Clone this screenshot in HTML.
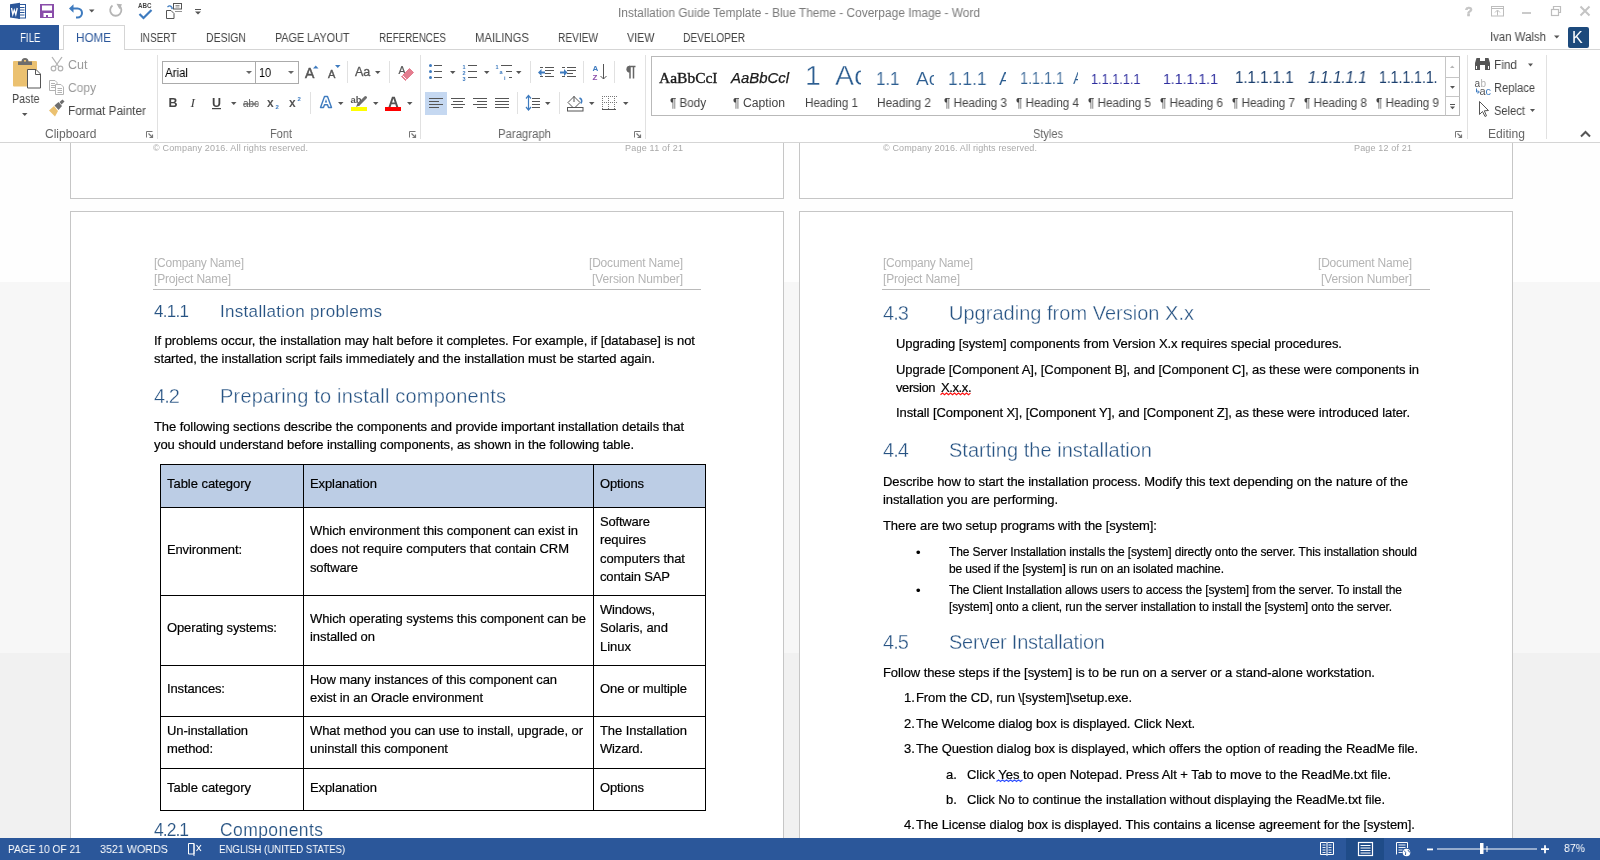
<!DOCTYPE html>
<html><head><meta charset="utf-8">
<style>
*{box-sizing:border-box;margin:0;padding:0}
html,body{width:1600px;height:860px;overflow:hidden;background:#fff;font-family:"Liberation Sans",sans-serif}
.a{position:absolute}
.t{position:absolute;white-space:pre;line-height:1;font-family:"Liberation Sans",sans-serif;will-change:transform}
svg{position:absolute;overflow:visible}
.page{position:absolute;background:#fff;border:1px solid #c6c6c6}
</style></head><body>
<!-- doc background bands -->
<div class="a" style="left:0;top:143px;width:1600px;height:139px;background:#fefefe"></div>
<div class="a" style="left:0;top:282px;width:1600px;height:371px;background:#f7f7f7"></div>
<div class="a" style="left:0;top:653px;width:1600px;height:185px;background:#f1f1f1"></div>

<!-- pages -->
<div class="page" style="left:70px;top:130px;width:714px;height:69px"></div>
<div class="page" style="left:799px;top:130px;width:714px;height:69px"></div>
<div class="page" style="left:70px;top:211px;width:714px;height:700px"></div>
<div class="page" style="left:799px;top:211px;width:714px;height:700px"></div>

<!-- header underline -->
<div class="a" style="left:153px;top:289px;width:548px;height:1px;background:#bababa"></div>
<div class="a" style="left:882px;top:289px;width:548px;height:1px;background:#bababa"></div>

<!-- table -->
<div class="a" style="left:160px;top:464px;width:546px;height:347px;border:1px solid #000"></div>
<div class="a" style="left:161px;top:465px;width:544px;height:42px;background:#bccde5"></div>
<div class="a" style="left:303px;top:464px;width:1px;height:347px;background:#000"></div>
<div class="a" style="left:593px;top:464px;width:1px;height:347px;background:#000"></div>
<div class="a" style="left:160px;top:507px;width:546px;height:1px;background:#000"></div>
<div class="a" style="left:160px;top:595px;width:546px;height:1px;background:#000"></div>
<div class="a" style="left:160px;top:665px;width:546px;height:1px;background:#000"></div>
<div class="a" style="left:160px;top:716px;width:546px;height:1px;background:#000"></div>
<div class="a" style="left:160px;top:768px;width:546px;height:1px;background:#000"></div>

<!-- spelling squiggles -->
<svg class="a" style="left:0;top:0" width="1600" height="860">
<path d="M940.5 394.7 L942.5 393.1 L944.5 394.7 L946.5 393.1 L948.5 394.7 L950.5 393.1 L952.5 394.7 L954.5 393.1 L956.5 394.7 L958.5 393.1 L960.5 394.7 L962.5 393.1 L964.5 394.7 L966.5 393.1 L968.5 394.7 L970.5 393.1" fill="none" stroke="#ff1010" stroke-width="1.2"/>
<path d="M996.5 781.5 L998.5 779.9 L1000.5 781.5 L1002.5 779.9 L1004.5 781.5 L1006.5 779.9 L1008.5 781.5 L1010.5 779.9 L1012.5 781.5 L1014.5 779.9 L1016.5 781.5 L1018.5 779.9 L1020.5 781.5 L1022.5 779.9" fill="none" stroke="#2f4fff" stroke-width="1.2"/>
</svg>

<div class=t style='left:153px;top:143.88px;font-size:9px;color:#a9a9a9;letter-spacing:0.166px;'>© Company 2016. All rights reserved.</div>
<div class=t style='left:625px;top:143.88px;font-size:9px;color:#a9a9a9;letter-spacing:0.217px;'>Page 11 of 21</div>
<div class=t style='left:154px;top:256.84px;font-size:12px;color:#b4b4b4;letter-spacing:-0.260px;'>[Company Name]</div>
<div class=t style='left:154px;top:272.84px;font-size:12px;color:#b4b4b4;letter-spacing:-0.181px;'>[Project Name]</div>
<div class=t style='left:589px;top:256.84px;font-size:12px;color:#b4b4b4;letter-spacing:-0.193px;'>[Document Name]</div>
<div class=t style='left:592px;top:272.84px;font-size:12px;color:#b4b4b4;letter-spacing:-0.115px;'>[Version Number]</div>
<div class=t style='left:154px;top:302.61px;font-size:17px;color:#275383;letter-spacing:-0.703px;-webkit-text-stroke:0.15px #fff;'>4.1.1</div>
<div class=t style='left:220px;top:302.61px;font-size:17px;color:#275383;letter-spacing:0.304px;-webkit-text-stroke:0.15px #fff;'>Installation problems</div>
<div class=t style='left:154px;top:334.00px;font-size:13px;color:#000;letter-spacing:-0.069px;-webkit-text-stroke:0.2px #000;'>If problems occur, the installation may halt before it completes. For example, if [database] is not</div>
<div class=t style='left:154px;top:352.00px;font-size:13px;color:#000;letter-spacing:-0.083px;-webkit-text-stroke:0.2px #000;'>started, the installation script fails immediately and the installation must be started again.</div>
<div class=t style='left:154px;top:386.07px;font-size:20px;color:#275383;letter-spacing:-0.906px;-webkit-text-stroke:0.35px #fff;'>4.2</div>
<div class=t style='left:220px;top:386.07px;font-size:20px;color:#275383;letter-spacing:0.195px;-webkit-text-stroke:0.35px #fff;'>Preparing to install components</div>
<div class=t style='left:154px;top:420.00px;font-size:13px;color:#000;letter-spacing:-0.082px;-webkit-text-stroke:0.2px #000;'>The following sections describe the components and provide important installation details that</div>
<div class=t style='left:154px;top:438.00px;font-size:13px;color:#000;letter-spacing:-0.094px;-webkit-text-stroke:0.2px #000;'>you should understand before installing components, as shown in the following table.</div>
<div class=t style='left:167px;top:477.00px;font-size:13px;color:#000;letter-spacing:-0.043px;-webkit-text-stroke:0.2px #000;'>Table category</div>
<div class=t style='left:310px;top:477.00px;font-size:13px;color:#000;letter-spacing:-0.095px;-webkit-text-stroke:0.2px #000;'>Explanation</div>
<div class=t style='left:600px;top:477.00px;font-size:13px;color:#000;letter-spacing:-0.135px;-webkit-text-stroke:0.2px #000;'>Options</div>
<div class=t style='left:167px;top:542.50px;font-size:13px;color:#000;letter-spacing:-0.145px;-webkit-text-stroke:0.2px #000;'>Environment:</div>
<div class=t style='left:310px;top:524.00px;font-size:13px;color:#000;letter-spacing:-0.084px;-webkit-text-stroke:0.2px #000;'>Which environment this component can exist in</div>
<div class=t style='left:310px;top:542.00px;font-size:13px;color:#000;letter-spacing:-0.079px;-webkit-text-stroke:0.2px #000;'>does not require computers that contain CRM</div>
<div class=t style='left:310px;top:560.50px;font-size:13px;color:#000;letter-spacing:-0.163px;-webkit-text-stroke:0.2px #000;'>software</div>
<div class=t style='left:600px;top:514.50px;font-size:13px;color:#000;letter-spacing:-0.188px;-webkit-text-stroke:0.2px #000;'>Software</div>
<div class=t style='left:600px;top:533.00px;font-size:13px;color:#000;letter-spacing:-0.138px;-webkit-text-stroke:0.2px #000;'>requires</div>
<div class=t style='left:600px;top:551.50px;font-size:13px;color:#000;letter-spacing:-0.077px;-webkit-text-stroke:0.2px #000;'>computers that</div>
<div class=t style='left:600px;top:570.00px;font-size:13px;color:#000;letter-spacing:-0.155px;-webkit-text-stroke:0.2px #000;'>contain SAP</div>
<div class=t style='left:167px;top:621.00px;font-size:13px;color:#000;letter-spacing:-0.118px;-webkit-text-stroke:0.2px #000;'>Operating systems:</div>
<div class=t style='left:310px;top:612.00px;font-size:13px;color:#000;letter-spacing:-0.083px;-webkit-text-stroke:0.2px #000;'>Which operating systems this component can be</div>
<div class=t style='left:310px;top:630.00px;font-size:13px;color:#000;letter-spacing:-0.071px;-webkit-text-stroke:0.2px #000;'>installed on</div>
<div class=t style='left:600px;top:603.00px;font-size:13px;color:#000;letter-spacing:-0.194px;-webkit-text-stroke:0.2px #000;'>Windows,</div>
<div class=t style='left:600px;top:621.00px;font-size:13px;color:#000;letter-spacing:-0.060px;-webkit-text-stroke:0.2px #000;'>Solaris, and</div>
<div class=t style='left:600px;top:639.50px;font-size:13px;color:#000;letter-spacing:-0.020px;-webkit-text-stroke:0.2px #000;'>Linux</div>
<div class=t style='left:167px;top:682.00px;font-size:13px;color:#000;letter-spacing:-0.141px;-webkit-text-stroke:0.2px #000;'>Instances:</div>
<div class=t style='left:310px;top:673.00px;font-size:13px;color:#000;letter-spacing:-0.096px;-webkit-text-stroke:0.2px #000;'>How many instances of this component can</div>
<div class=t style='left:310px;top:691.00px;font-size:13px;color:#000;letter-spacing:-0.089px;-webkit-text-stroke:0.2px #000;'>exist in an Oracle environment</div>
<div class=t style='left:600px;top:682.00px;font-size:13px;color:#000;letter-spacing:-0.083px;-webkit-text-stroke:0.2px #000;'>One or multiple</div>
<div class=t style='left:167px;top:724.00px;font-size:13px;color:#000;letter-spacing:-0.098px;-webkit-text-stroke:0.2px #000;'>Un-installation</div>
<div class=t style='left:167px;top:742.00px;font-size:13px;color:#000;letter-spacing:-0.164px;-webkit-text-stroke:0.2px #000;'>method:</div>
<div class=t style='left:310px;top:724.00px;font-size:13px;color:#000;letter-spacing:-0.066px;-webkit-text-stroke:0.2px #000;'>What method you can use to install, upgrade, or</div>
<div class=t style='left:310px;top:742.00px;font-size:13px;color:#000;letter-spacing:-0.065px;-webkit-text-stroke:0.2px #000;'>uninstall this component</div>
<div class=t style='left:600px;top:724.00px;font-size:13px;color:#000;letter-spacing:-0.078px;-webkit-text-stroke:0.2px #000;'>The Installation</div>
<div class=t style='left:600px;top:742.00px;font-size:13px;color:#000;letter-spacing:-0.177px;-webkit-text-stroke:0.2px #000;'>Wizard.</div>
<div class=t style='left:167px;top:781.00px;font-size:13px;color:#000;letter-spacing:-0.043px;-webkit-text-stroke:0.2px #000;'>Table category</div>
<div class=t style='left:310px;top:781.00px;font-size:13px;color:#000;letter-spacing:-0.095px;-webkit-text-stroke:0.2px #000;'>Explanation</div>
<div class=t style='left:600px;top:781.00px;font-size:13px;color:#000;letter-spacing:-0.135px;-webkit-text-stroke:0.2px #000;'>Options</div>
<div class=t style='left:154px;top:821.69px;font-size:17.5px;color:#275383;letter-spacing:-0.984px;-webkit-text-stroke:0.15px #fff;'>4.2.1</div>
<div class=t style='left:220px;top:821.69px;font-size:17.5px;color:#275383;letter-spacing:0.418px;-webkit-text-stroke:0.15px #fff;'>Components</div>
<div class=t style='left:883px;top:143.88px;font-size:9px;color:#a9a9a9;letter-spacing:0.137px;'>© Company 2016. All rights reserved.</div>
<div class=t style='left:1354px;top:143.88px;font-size:9px;color:#a9a9a9;letter-spacing:0.161px;'>Page 12 of 21</div>
<div class=t style='left:883px;top:256.84px;font-size:12px;color:#b4b4b4;letter-spacing:-0.260px;'>[Company Name]</div>
<div class=t style='left:883px;top:272.84px;font-size:12px;color:#b4b4b4;letter-spacing:-0.181px;'>[Project Name]</div>
<div class=t style='left:1318px;top:256.84px;font-size:12px;color:#b4b4b4;letter-spacing:-0.193px;'>[Document Name]</div>
<div class=t style='left:1321px;top:272.84px;font-size:12px;color:#b4b4b4;letter-spacing:-0.115px;'>[Version Number]</div>
<div class=t style='left:883px;top:302.57px;font-size:20px;color:#275383;letter-spacing:-0.906px;-webkit-text-stroke:0.35px #fff;'>4.3</div>
<div class=t style='left:949px;top:302.57px;font-size:20px;color:#275383;letter-spacing:0.018px;-webkit-text-stroke:0.35px #fff;'>Upgrading from Version X.x</div>
<div class=t style='left:896px;top:336.50px;font-size:13px;color:#000;letter-spacing:-0.086px;-webkit-text-stroke:0.2px #000;'>Upgrading [system] components from Version X.x requires special procedures.</div>
<div class=t style='left:896px;top:362.50px;font-size:13px;color:#000;letter-spacing:-0.081px;-webkit-text-stroke:0.2px #000;'>Upgrade [Component A], [Component B], and [Component C], as these were components in</div>
<div class=t style='left:896px;top:380.50px;font-size:13px;color:#000;letter-spacing:-0.404px;-webkit-text-stroke:0.2px #000;'>version</div>
<div class=t style='left:940.5px;top:380.50px;font-size:13px;color:#000;letter-spacing:-0.403px;-webkit-text-stroke:0.2px #000;'>X.x.x.</div>
<div class=t style='left:896px;top:406.00px;font-size:13px;color:#000;letter-spacing:-0.078px;-webkit-text-stroke:0.2px #000;'>Install [Component X], [Component Y], and [Component Z], as these were introduced later.</div>
<div class=t style='left:883px;top:439.57px;font-size:20px;color:#275383;letter-spacing:-0.906px;-webkit-text-stroke:0.35px #fff;'>4.4</div>
<div class=t style='left:949px;top:439.57px;font-size:20px;color:#275383;letter-spacing:0.027px;-webkit-text-stroke:0.35px #fff;'>Starting the installation</div>
<div class=t style='left:883px;top:474.50px;font-size:13px;color:#000;letter-spacing:-0.081px;-webkit-text-stroke:0.2px #000;'>Describe how to start the installation process. Modify this text depending on the nature of the</div>
<div class=t style='left:883px;top:492.50px;font-size:13px;color:#000;letter-spacing:-0.089px;-webkit-text-stroke:0.2px #000;'>installation you are performing.</div>
<div class=t style='left:883px;top:518.50px;font-size:13px;color:#000;letter-spacing:-0.091px;-webkit-text-stroke:0.2px #000;'>There are two setup programs with the [system]:</div>
<div class=t style='left:915.5px;top:545.50px;font-size:13px;color:#000;-webkit-text-stroke:0.2px #000;'>•</div>
<div class=t style='left:949px;top:545.84px;font-size:12px;color:#000;letter-spacing:-0.126px;-webkit-text-stroke:0.2px #000;'>The Server Installation installs the [system] directly onto the server. This installation should</div>
<div class=t style='left:949px;top:562.84px;font-size:12px;color:#000;letter-spacing:-0.148px;-webkit-text-stroke:0.2px #000;'>be used if the [system] is run on an isolated machine.</div>
<div class=t style='left:915.5px;top:583.50px;font-size:13px;color:#000;-webkit-text-stroke:0.2px #000;'>•</div>
<div class=t style='left:949px;top:583.84px;font-size:12px;color:#000;letter-spacing:-0.115px;-webkit-text-stroke:0.2px #000;'>The Client Installation allows users to access the [system] from the server. To install the</div>
<div class=t style='left:949px;top:600.84px;font-size:12px;color:#000;letter-spacing:-0.131px;-webkit-text-stroke:0.2px #000;'>[system] onto a client, run the server installation to install the [system] onto the server.</div>
<div class=t style='left:883px;top:631.57px;font-size:20px;color:#275383;letter-spacing:-0.906px;-webkit-text-stroke:0.35px #fff;'>4.5</div>
<div class=t style='left:949px;top:631.57px;font-size:20px;color:#275383;letter-spacing:-0.227px;-webkit-text-stroke:0.35px #fff;'>Server Installation</div>
<div class=t style='left:883px;top:665.50px;font-size:13px;color:#000;letter-spacing:-0.075px;-webkit-text-stroke:0.2px #000;'>Follow these steps if the [system] is to be run on a server or a stand-alone workstation.</div>
<div class=t style='left:904px;top:690.50px;font-size:13px;color:#000;-webkit-text-stroke:0.2px #000;'>1.</div>
<div class=t style='left:916px;top:690.50px;font-size:13px;color:#000;letter-spacing:-0.101px;-webkit-text-stroke:0.2px #000;'>From the CD, run \[system]\setup.exe.</div>
<div class=t style='left:904px;top:716.70px;font-size:13px;color:#000;-webkit-text-stroke:0.2px #000;'>2.</div>
<div class=t style='left:916px;top:716.70px;font-size:13px;color:#000;letter-spacing:-0.100px;-webkit-text-stroke:0.2px #000;'>The Welcome dialog box is displayed. Click Next.</div>
<div class=t style='left:904px;top:741.50px;font-size:13px;color:#000;-webkit-text-stroke:0.2px #000;'>3.</div>
<div class=t style='left:916px;top:741.50px;font-size:13px;color:#000;letter-spacing:-0.082px;-webkit-text-stroke:0.2px #000;'>The Question dialog box is displayed, which offers the option of reading the ReadMe file.</div>
<div class=t style='left:946px;top:768.00px;font-size:13px;color:#000;-webkit-text-stroke:0.2px #000;'>a.</div>
<div class=t style='left:967px;top:768.00px;font-size:13px;color:#000;letter-spacing:-0.034px;-webkit-text-stroke:0.2px #000;'>Click Yes to open Notepad. Press Alt + Tab to move to the ReadMe.txt file.</div>
<div class=t style='left:946px;top:793.00px;font-size:13px;color:#000;-webkit-text-stroke:0.2px #000;'>b.</div>
<div class=t style='left:967px;top:793.00px;font-size:13px;color:#000;letter-spacing:-0.081px;-webkit-text-stroke:0.2px #000;'>Click No to continue the installation without displaying the ReadMe.txt file.</div>
<div class=t style='left:904px;top:817.50px;font-size:13px;color:#000;-webkit-text-stroke:0.2px #000;'>4.</div>
<div class=t style='left:916px;top:817.50px;font-size:13px;color:#000;letter-spacing:-0.076px;-webkit-text-stroke:0.2px #000;'>The License dialog box is displayed. This contains a license agreement for the [system].</div>

<!-- ============ CHROME BACKGROUNDS ============ -->
<div class="a" style="left:0;top:0;width:1600px;height:142px;background:#fff"></div>
<div class="a" style="left:0;top:142px;width:1600px;height:1px;background:#d5d5d5"></div>
<div class="a" style="left:0;top:49px;width:1600px;height:1px;background:#d5d5d5"></div>
<!-- FILE -->
<div class="a" style="left:0;top:25px;width:59px;height:25px;background:#2b579a"></div>
<!-- HOME tab -->
<div class="a" style="left:63px;top:25px;width:62px;height:25px;border:1px solid #d5d5d5;border-bottom:none;background:#fff"></div>
<!-- K avatar -->
<div class="a" style="left:1568px;top:27px;width:21px;height:21px;background:#1d4a7c;border-radius:2px"></div>
<!-- status bar -->
<div class="a" style="left:0;top:838px;width:1600px;height:22px;background:#2b579a"></div>
<div class="a" style="left:1346px;top:838px;width:38px;height:22px;background:#1f4c88"></div>

<svg class="a" style="left:0;top:0" width="1600" height="860" shape-rendering="geometricPrecision">
<!-- ===== Title bar ===== -->
<!-- Word icon -->
<rect x="18.5" y="4.5" width="7" height="13.5" fill="#fff" stroke="#2b579a" stroke-width="1"/>
<path d="M20 7.5h4.5M20 10h4.5M20 12.5h4.5M20 15h4.5" stroke="#2b579a" stroke-width="1"/>
<path d="M10 4.2 L20 2.8 L20 19 L10 17.6 Z" fill="#2b579a"/>
<path d="M11.5 8 L12.8 14.5 L14.3 10 L15.8 14.5 L17.2 8" fill="none" stroke="#fff" stroke-width="1.3"/>
<!-- Save -->
<path d="M40 4 H54 V18 H40 Z M42 5.5 V10.5 H52 V5.5 Z M43.5 13 V17 H46 V15 H48 V17 H52 V13 Z" fill="#8a4eaa" fill-rule="evenodd"/>
<!-- Undo -->
<path d="M71 8.5 H77.5 A4.5 4.5 0 0 1 77.5 17.5 H76" fill="none" stroke="#3e7bbf" stroke-width="2"/>
<path d="M69 8.5 L73.5 4.2 L73.5 12.8 Z" fill="#3e7bbf"/>
<path d="M89 9.5 h5.5 l-2.75 3 z" fill="#555"/>
<!-- Redo (disabled) -->
<path d="M119.3 5.8 A5.6 5.6 0 1 1 112.5 5.6" fill="none" stroke="#b5b5b5" stroke-width="1.8"/>
<path d="M116.5 3.8 L122 4.2 L119.5 9.2 Z" fill="#b5b5b5"/>
<!-- Spelling -->
<text x="138" y="7.8" font-family="Liberation Sans" font-weight="bold" font-size="6.3" fill="#444" textLength="13.5" lengthAdjust="spacingAndGlyphs">ABC</text>
<path d="M139.5 14 L143.5 18 L151.5 10" fill="none" stroke="#3e7bbf" stroke-width="2.2"/>
<!-- Draft / other icon -->
<path d="M166.5 10.5 H171 L174 13.5 V18.5 H166.5 Z" fill="#fff" stroke="#555" stroke-width="1"/>
<rect x="173.5" y="3.5" width="8" height="5.5" fill="#fff" stroke="#555" stroke-width="1"/>
<path d="M175.5 5.5h4M175.5 7h4M175 11.5h7" stroke="#777" stroke-width="0.8"/>
<path d="M167.5 7 Q170 4.5 172 7.5" fill="none" stroke="#3e7bbf" stroke-width="1.2"/>
<path d="M170.5 7.5 L173.5 7.5 L172 9.5 Z" fill="#3e7bbf"/>
<!-- customize -->
<path d="M195 9.5 h6" stroke="#555" stroke-width="1"/>
<path d="M195 11.5 h6 l-3 3 z" fill="#555"/>
<!-- right window controls -->
<text x="1465" y="16" font-family="Liberation Sans" font-weight="bold" font-size="12.5" fill="#c4c4c4" stroke="#c4c4c4" stroke-width="0.7">?</text>
<rect x="1491.5" y="6.5" width="12" height="9.5" fill="none" stroke="#bdbdbd" stroke-width="1"/>
<path d="M1491.5 8.5 h12" stroke="#bdbdbd" stroke-width="1"/>
<path d="M1497.5 15.5 V10.5 M1495 12.5 L1497.5 10 L1500 12.5" fill="none" stroke="#bdbdbd" stroke-width="1"/>
<path d="M1522 13 h9" stroke="#bdbdbd" stroke-width="1.6"/>
<rect x="1551.5" y="9.5" width="7" height="6" fill="none" stroke="#bdbdbd" stroke-width="1.2"/>
<path d="M1553.5 9.5 V6.5 H1560.5 V12.5 H1558.5" fill="none" stroke="#bdbdbd" stroke-width="1.2"/>
<path d="M1580.5 6.5 L1589.5 15.5 M1589.5 6.5 L1580.5 15.5" stroke="#c4c4c4" stroke-width="2"/>
<!-- user dropdown -->
<path d="M1554 35.5 h5.5 l-2.75 3 z" fill="#555"/>

<!-- ===== Clipboard ===== -->
<rect x="13" y="61" width="24" height="25.5" rx="1" fill="#ebc170"/>
<path d="M18 65 V61.5 H21.5 Q21.5 58 25 58 Q28.5 58 28.5 61.5 H32 V65 Z" fill="#6d6d6d"/>
<rect x="24" y="60" width="2" height="1.6" fill="#ebc170"/>
<path d="M27.5 69.5 H36 L40.5 74 V88 H27.5 Z" fill="#fff" stroke="#555" stroke-width="1"/>
<path d="M35.5 69.5 V74.5 H40.5" fill="none" stroke="#555" stroke-width="1"/>
<path d="M22 113 h5.5 l-2.75 3 z" fill="#555"/>
<!-- cut -->
<path d="M52 57 L59 67 M62 57 L55 67" stroke="#b3b3b3" stroke-width="1.3"/>
<circle cx="53.5" cy="68.5" r="2.3" fill="none" stroke="#b3b3b3" stroke-width="1.2"/>
<circle cx="60.5" cy="68.5" r="2.3" fill="none" stroke="#b3b3b3" stroke-width="1.2"/>
<!-- copy -->
<path d="M49.5 80.5 H55 L57 82.5 V90.5 H49.5 Z" fill="#fff" stroke="#b3b3b3" stroke-width="1"/>
<path d="M55.5 84.5 H61 L63.5 87 V94.5 H55.5 Z" fill="#fff" stroke="#b3b3b3" stroke-width="1"/>
<path d="M51 83.5h4M51 85.5h4M51 87.5h4M57.5 88.5h4.5M57.5 90.5h4.5M57.5 92.5h4.5" stroke="#b3b3b3" stroke-width="1"/>
<!-- format painter -->
<path d="M49 110.5 L54 106 L58 111 L55 116.5 Z" fill="#ebc170"/>
<path d="M54.5 105.5 L58.5 102 L62 106 L58.5 110 Z" fill="#6d6d6d"/>
<path d="M59.5 102 L62.5 99.5 L64.5 101.5 L61.5 104.5 Z" fill="#6d6d6d"/>
<!-- launcher -->
<path d="M146.5 137.5 V131.5 H152.5" fill="none" stroke="#777" stroke-width="1"/>
<path d="M148.5 133.5 L152.5 137.5 M152.5 134.5 V137.5 H149.5" fill="none" stroke="#777" stroke-width="1.2"/>
<rect x="157" y="55" width="1" height="84" fill="#e1e1e1"/>

<!-- ===== Font ===== -->
<rect x="162.5" y="61.5" width="136" height="22" fill="#fff" stroke="#ababab" stroke-width="1"/>
<path d="M255.5 61.5 V83.5" stroke="#ababab" stroke-width="1"/>
<path d="M246 71 h6 l-3 3 z" fill="#666"/>
<path d="M288 71 h6 l-3 3 z" fill="#666"/>
<text x="305" y="78" font-family="Liberation Sans" font-size="14" fill="#555" stroke="#555" stroke-width="0.5">A</text>
<path d="M313 68.5 h5.5 l-2.75 -3 z" fill="#3e7bbf"/>
<text x="328" y="78" font-family="Liberation Sans" font-size="11" fill="#555" stroke="#555" stroke-width="0.4">A</text>
<path d="M335 65 h5.5 l-2.75 3 z" fill="#3e7bbf"/>
<rect x="347" y="61" width="1" height="22" fill="#e1e1e1"/>
<text x="355" y="76" font-family="Liberation Sans" font-size="12.5" fill="#555" stroke="#555" stroke-width="0.3">Aa</text>
<path d="M375 71 h5.5 l-2.75 3 z" fill="#555"/>
<rect x="389" y="61" width="1" height="22" fill="#e1e1e1"/>
<text x="398.5" y="73.5" font-family="Liberation Sans" font-size="10.5" fill="#555" stroke="#555" stroke-width="0.2">A</text>
<path d="M401.5 76.5 L409.5 68.5 L413.5 72.5 L405.5 80.5 Z" fill="#e47d8f" stroke="#e47d8f" stroke-width="1" stroke-linejoin="round"/>
<path d="M402.5 75.5 L406.5 79.5" stroke="#fff" stroke-width="1"/>
<!-- row 2 -->
<text x="168.5" y="107.2" font-family="Liberation Sans" font-weight="bold" font-size="12.5" fill="#444">B</text>
<text x="190.5" y="107.2" font-family="Liberation Serif" font-style="italic" font-size="13.5" fill="#444">I</text>
<text x="212" y="107" font-family="Liberation Sans" font-weight="bold" font-size="12.5" fill="#444">U</text>
<rect x="212" y="108" width="9" height="1.2" fill="#444"/>
<path d="M231 102 h5.5 l-2.75 3 z" fill="#555"/>
<text x="243" y="107" font-family="Liberation Sans" font-size="11" fill="#555" textLength="16" lengthAdjust="spacingAndGlyphs">abc</text>
<rect x="243" y="103.5" width="16" height="1" fill="#555"/>
<text x="267" y="107.2" font-family="Liberation Sans" font-weight="bold" font-size="12" fill="#555">x</text>
<text x="275.5" y="108.5" font-family="Liberation Sans" font-weight="bold" font-size="6" fill="#3e7bbf">2</text>
<text x="289" y="107.2" font-family="Liberation Sans" font-weight="bold" font-size="12" fill="#555">x</text>
<text x="297.5" y="100.5" font-family="Liberation Sans" font-weight="bold" font-size="6" fill="#3e7bbf">2</text>
<rect x="310" y="92" width="1" height="22" fill="#e1e1e1"/>
<path d="M320.5 107.5 L324.5 96.5 H327.5 L331.5 107.5 H328.5 L327.5 104.7 H324.5 L323.5 107.5 Z" fill="#fff" stroke="#3e7bbf" stroke-width="1.4" stroke-linejoin="round"/>
<path d="M324.8 102.6 L326 99 L327.2 102.6 Z" fill="#3e7bbf"/>
<path d="M338 102 h5.5 l-2.75 3 z" fill="#555"/>
<text x="350.5" y="102.5" font-family="Liberation Sans" font-weight="bold" font-size="9.5" fill="#555">ab</text>
<path d="M358.5 104.5 L365.5 97.5" stroke="#6d6d6d" stroke-width="3" stroke-linecap="round"/>
<path d="M356 107 L357.5 103.5 L359.5 105.5 Z" fill="#6d6d6d"/>
<rect x="351" y="107" width="16" height="4" fill="#ffff00"/>
<path d="M373 102 h5.5 l-2.75 3 z" fill="#555"/>
<path d="M388.5 107 L392 96.8 H394.8 L398.3 107 H396.2 L395.3 104.2 H391.5 L390.6 107 Z M392.1 102.5 H394.7 L393.4 98.6 Z" fill="#555" fill-rule="evenodd"/>
<rect x="385" y="107" width="16" height="4" fill="#ff0000"/>
<path d="M407 102 h5.5 l-2.75 3 z" fill="#555"/>
<path d="M409.5 137.5 V131.5 H415.5" fill="none" stroke="#777" stroke-width="1"/>
<path d="M411.5 133.5 L415.5 137.5 M415.5 134.5 V137.5 H412.5" fill="none" stroke="#777" stroke-width="1.2"/>
<rect x="420" y="55" width="1" height="84" fill="#e1e1e1"/>

<!-- ===== Paragraph ===== -->
<g fill="#3e7bbf"><circle cx="430.5" cy="65.5" r="1.5"/><circle cx="430.5" cy="71.5" r="1.5"/><circle cx="430.5" cy="77.5" r="1.5"/></g>
<path d="M434 65.5h8M434 71.5h8M434 77.5h8" stroke="#555" stroke-width="1"/>
<path d="M450 71 h5.5 l-2.75 3 z" fill="#555"/>
<text x="462.5" y="68.5" font-family="Liberation Sans" font-weight="bold" font-size="5.5" fill="#3e7bbf">1</text>
<text x="462.5" y="74.5" font-family="Liberation Sans" font-weight="bold" font-size="5.5" fill="#3e7bbf">2</text>
<text x="462.5" y="80.5" font-family="Liberation Sans" font-weight="bold" font-size="5.5" fill="#3e7bbf">3</text>
<path d="M468 65.5h9M468 71.5h9M468 77.5h9" stroke="#555" stroke-width="1"/>
<path d="M484 71 h5.5 l-2.75 3 z" fill="#555"/>
<text x="495.5" y="68.5" font-family="Liberation Sans" font-weight="bold" font-size="5.5" fill="#3e7bbf">1</text>
<text x="499.5" y="74" font-family="Liberation Sans" font-weight="bold" font-size="5.5" fill="#3e7bbf">a</text>
<text x="504" y="79.5" font-family="Liberation Sans" font-weight="bold" font-size="5.5" fill="#3e7bbf">i</text>
<path d="M501 65.5h11M506 71.5h6M509 77.5h3" stroke="#555" stroke-width="1"/>
<path d="M516 71 h5.5 l-2.75 3 z" fill="#555"/>
<rect x="530" y="61" width="1" height="22" fill="#e1e1e1"/>
<path d="M540 67.5h3M545 67.5h9M545 70.5h9M545 73.5h6M540 76.5h3M545 76.5h9" stroke="#555" stroke-width="1"/>
<path d="M538 72.5 L541.5 69 V71.5 H545 V73.5 H541.5 V76 Z" fill="#3e7bbf"/>
<path d="M562 67.5h3M567 67.5h9M567 70.5h9M567 73.5h6M562 76.5h3M567 76.5h9" stroke="#555" stroke-width="1"/>
<path d="M567.5 72.5 L564 69 V71.5 H560 V73.5 H564 V76 Z" fill="#3e7bbf"/>
<rect x="583" y="61" width="1" height="22" fill="#e1e1e1"/>
<text x="592.5" y="70.5" font-family="Liberation Sans" font-weight="bold" font-size="8" fill="#3e7bbf">A</text>
<text x="592.5" y="79.5" font-family="Liberation Sans" font-weight="bold" font-size="8" fill="#8a4eaa">Z</text>
<path d="M603.5 64 V79" stroke="#555" stroke-width="1"/>
<path d="M600.5 76 L603.5 79 L606.5 76" fill="none" stroke="#555" stroke-width="1"/>
<rect x="614" y="61" width="1" height="22" fill="#e1e1e1"/>
<path d="M629 66.5 H635.5 M630 66.5 V78.5 M633.5 66.5 V78.5" stroke="#666" stroke-width="1.5"/>
<path d="M630 65.8 A3.6 3.4 0 0 0 630 72.6 Z" fill="#666"/>
<!-- row 2 -->
<rect x="425" y="92" width="22" height="23" fill="#c5d8f1"/>
<path d="M429 98.5h14M429 101.5h10M429 104.5h14M429 107.5h10" stroke="#555" stroke-width="1"/>
<path d="M451 98.5h14M453 101.5h10M451 104.5h14M453 107.5h10" stroke="#555" stroke-width="1"/>
<path d="M473 98.5h14M477 101.5h10M473 104.5h14M477 107.5h10" stroke="#555" stroke-width="1"/>
<path d="M495 98.5h14M495 101.5h14M495 104.5h14M495 107.5h14" stroke="#555" stroke-width="1"/>
<rect x="517" y="92" width="1" height="22" fill="#e1e1e1"/>
<path d="M528.5 96 V109.5" stroke="#3e7bbf" stroke-width="1.2"/>
<path d="M526 98.5 L528.5 95.5 L531 98.5 M526 107 L528.5 110 L531 107" fill="none" stroke="#3e7bbf" stroke-width="1.2"/>
<path d="M532 98.5h8M532 101.5h8M532 104.5h8M532 107.5h8" stroke="#555" stroke-width="1"/>
<path d="M545 102 h5.5 l-2.75 3 z" fill="#555"/>
<rect x="559" y="92" width="1" height="22" fill="#e1e1e1"/>
<path d="M568 102.5 L574 96.5 L580 102.5 L574 108.5 Z" fill="#fff" stroke="#555" stroke-width="1"/>
<path d="M574 96 V102" stroke="#555" stroke-width="1"/>
<path d="M579.5 98 Q583 99.5 581 103.5" fill="none" stroke="#3e7bbf" stroke-width="1.6"/>
<rect x="567.5" y="107.5" width="15.5" height="3.5" fill="#fff" stroke="#555" stroke-width="1"/>
<path d="M589 102 h5.5 l-2.75 3 z" fill="#555"/>
<g fill="#777"><rect x="602" y="96" width="1" height="1"/><rect x="602" y="102" width="1" height="1"/><rect x="604" y="96" width="1" height="1"/><rect x="604" y="102" width="1" height="1"/><rect x="606" y="96" width="1" height="1"/><rect x="606" y="102" width="1" height="1"/><rect x="608" y="96" width="1" height="1"/><rect x="608" y="102" width="1" height="1"/><rect x="610" y="96" width="1" height="1"/><rect x="610" y="102" width="1" height="1"/><rect x="612" y="96" width="1" height="1"/><rect x="612" y="102" width="1" height="1"/><rect x="614" y="96" width="1" height="1"/><rect x="614" y="102" width="1" height="1"/><rect x="616" y="96" width="1" height="1"/><rect x="616" y="102" width="1" height="1"/><rect x="602" y="98" width="1" height="1"/><rect x="608" y="98" width="1" height="1"/><rect x="614" y="98" width="1" height="1"/><rect x="602" y="100" width="1" height="1"/><rect x="608" y="100" width="1" height="1"/><rect x="614" y="100" width="1" height="1"/><rect x="602" y="102" width="1" height="1"/><rect x="608" y="102" width="1" height="1"/><rect x="614" y="102" width="1" height="1"/><rect x="602" y="104" width="1" height="1"/><rect x="608" y="104" width="1" height="1"/><rect x="614" y="104" width="1" height="1"/><rect x="602" y="106" width="1" height="1"/><rect x="608" y="106" width="1" height="1"/><rect x="614" y="106" width="1" height="1"/><rect x="602" y="108" width="1" height="1"/><rect x="608" y="108" width="1" height="1"/><rect x="614" y="108" width="1" height="1"/></g>
<path d="M602 109.5 H616" stroke="#555" stroke-width="1"/>
<path d="M623 102 h5.5 l-2.75 3 z" fill="#555"/>
<path d="M634.5 137.5 V131.5 H640.5" fill="none" stroke="#777" stroke-width="1"/>
<path d="M636.5 133.5 L640.5 137.5 M640.5 134.5 V137.5 H637.5" fill="none" stroke="#777" stroke-width="1.2"/>
<rect x="645" y="55" width="1" height="84" fill="#e1e1e1"/>

<!-- ===== Styles gallery ===== -->
<rect x="651.5" y="56.5" width="808" height="59" fill="none" stroke="#b9b9b9" stroke-width="1"/>
<path d="M1445.5 56.5 V115.5 M1445.5 77.5 H1459.5 M1445.5 96.5 H1459.5" stroke="#c6c6c6" stroke-width="1"/>
<path d="M1450 68 h4.5 l-2.25 -2.5 z" fill="#b5b5b5"/>
<path d="M1450 86 h5 l-2.5 2.8 z" fill="#555"/>
<path d="M1450 104.5 h5" stroke="#555" stroke-width="1"/>
<path d="M1450 106.5 h5 l-2.5 2.8 z" fill="#555"/>
<path d="M1455.5 137.5 V131.5 H1461.5" fill="none" stroke="#777" stroke-width="1"/>
<path d="M1457.5 133.5 L1461.5 137.5 M1461.5 134.5 V137.5 H1458.5" fill="none" stroke="#777" stroke-width="1.2"/>
<rect x="1467" y="55" width="1" height="84" fill="#e1e1e1"/>

<!-- ===== Editing ===== -->
<g fill="#555">
<path d="M1475 70 V63 L1476.5 58 H1480 V70 Z"/>
<path d="M1490 70 V63 L1488.5 58 H1485 V70 Z"/>
<rect x="1480" y="61" width="5" height="4"/>
</g>
<path d="M1476.5 66 V69 M1488.5 66 V69" stroke="#fff" stroke-width="1"/>
<path d="M1528 63.5 h5 l-2.5 3 z" fill="#555"/>
<text x="1474.5" y="87" font-family="Liberation Sans" font-size="10" fill="#555">a</text>
<text x="1480.5" y="87" font-family="Liberation Sans" font-size="10" fill="#b0b0b0">b</text>
<text x="1479.5" y="94.5" font-family="Liberation Sans" font-size="11" fill="#555">a</text>
<text x="1485.5" y="94.5" font-family="Liberation Sans" font-size="11" fill="#3e7bbf">c</text>
<path d="M1476.5 88.5 V92 H1479" fill="none" stroke="#3e7bbf" stroke-width="1"/>
<path d="M1477.5 90.5 L1479.5 92 L1477.5 93.5" fill="none" stroke="#3e7bbf" stroke-width="0.8"/>
<path d="M1479.5 101.5 V114.5 L1482.5 111.5 L1485 116.5 L1486.5 115.8 L1484.3 110.8 L1488.5 110.5 Z" fill="#fff" stroke="#555" stroke-width="1"/>
<path d="M1530 109 h5 l-2.5 3 z" fill="#555"/>
<rect x="1546" y="55" width="1" height="84" fill="#e1e1e1"/>
<path d="M1581 136.5 L1585.5 132 L1590 136.5" fill="none" stroke="#555" stroke-width="2"/>

<!-- ===== Status bar ===== -->
<!-- proofing icon -->
<path d="M188.5 843.5 H194 V854 H188.5 Z" fill="none" stroke="#fff" stroke-width="1"/>
<path d="M194 843.5 V856" stroke="#fff" stroke-width="1"/>
<path d="M196.5 845 L201 851 M201 845 L196.5 851" stroke="#fff" stroke-width="1.1"/>
<!-- read mode -->
<path d="M1320.5 842.5 H1326.5 L1327 843.5 L1327.5 842.5 H1333.5 V854.5 H1327.5 L1327 855.5 L1326.5 854.5 H1320.5 Z" fill="none" stroke="#fff" stroke-width="1"/>
<path d="M1322.5 845h3M1322.5 847.5h3M1322.5 850h3M1322.5 852.5h3M1328.5 845h3M1328.5 847.5h3M1328.5 850h3M1328.5 852.5h3" stroke="#fff" stroke-width="0.9"/>
<path d="M1327 843.5 V855" stroke="#fff" stroke-width="1"/>
<!-- print layout -->
<rect x="1358.5" y="842.5" width="14" height="13" fill="none" stroke="#fff" stroke-width="1.2"/>
<path d="M1360.5 845.5h10M1360.5 848h10M1360.5 850.5h10M1360.5 853h10" stroke="#fff" stroke-width="1"/>
<!-- web layout -->
<path d="M1396.5 854.5 V842.5 H1407.5 V848" fill="none" stroke="#fff" stroke-width="1"/>
<path d="M1398.5 845h7M1398.5 847.5h7M1398.5 850h4M1398.5 852.5h4" stroke="#fff" stroke-width="0.9"/>
<circle cx="1406.5" cy="852.5" r="3.8" fill="#fff"/>
<path d="M1404 850.5 Q1406.5 852 1405.5 855 M1408 850 Q1409 852.5 1410 852" fill="none" stroke="#2b579a" stroke-width="0.9"/>
<!-- zoom -->
<rect x="1427" y="848.5" width="6" height="1.8" fill="#fff"/>
<rect x="1437" y="848.5" width="100" height="1" fill="#fff"/>
<rect x="1480" y="843" width="3.5" height="11" fill="#fff"/>
<rect x="1486.5" y="846" width="1" height="6" fill="#fff"/>
<path d="M1541 849.2 h8 M1545 845.2 v8" stroke="#fff" stroke-width="1.8"/>
</svg>


<div class=t style='left:618px;top:7.34px;font-size:12px;color:#7a7a7a;transform:scaleX(0.9922);transform-origin:0 0;'>Installation Guide Template - Blue Theme - Coverpage Image - Word</div>
<div class=t style='left:19.5px;top:31.84px;font-size:12px;color:#fff;transform:scaleX(0.8089);transform-origin:0 0;'>FILE</div>
<div class=t style='left:76px;top:31.84px;font-size:12px;color:#2b579a;transform:scaleX(0.9722);transform-origin:0 0;'>HOME</div>
<div class=t style='left:140px;top:31.84px;font-size:12px;color:#444;transform:scaleX(0.8334);transform-origin:0 0;'>INSERT</div>
<div class=t style='left:206px;top:31.84px;font-size:12px;color:#444;transform:scaleX(0.8693);transform-origin:0 0;'>DESIGN</div>
<div class=t style='left:275px;top:31.84px;font-size:12px;color:#444;transform:scaleX(0.8984);transform-origin:0 0;'>PAGE LAYOUT</div>
<div class=t style='left:379px;top:31.84px;font-size:12px;color:#444;transform:scaleX(0.8169);transform-origin:0 0;'>REFERENCES</div>
<div class=t style='left:475px;top:31.84px;font-size:12px;color:#444;transform:scaleX(0.9414);transform-origin:0 0;'>MAILINGS</div>
<div class=t style='left:558px;top:31.84px;font-size:12px;color:#444;transform:scaleX(0.8449);transform-origin:0 0;'>REVIEW</div>
<div class=t style='left:626.5px;top:31.84px;font-size:12px;color:#444;transform:scaleX(0.8966);transform-origin:0 0;'>VIEW</div>
<div class=t style='left:683px;top:31.84px;font-size:12px;color:#444;transform:scaleX(0.8452);transform-origin:0 0;'>DEVELOPER</div>
<div class=t style='left:1490px;top:30.84px;font-size:12px;color:#444;transform:scaleX(0.9504);transform-origin:0 0;'>Ivan Walsh</div>
<div class=t style='left:1572px;top:30.46px;font-size:16px;color:#fff;'>K</div>
<div class=t style='left:11.5px;top:93.42px;font-size:12.5px;color:#444;transform:scaleX(0.8602);transform-origin:0 0;'>Paste</div>
<div class=t style='left:68px;top:58.82px;font-size:12.5px;color:#9a9a9a;transform:scaleX(0.9767);transform-origin:0 0;'>Cut</div>
<div class=t style='left:68px;top:82.22px;font-size:12.5px;color:#9a9a9a;transform:scaleX(0.9593);transform-origin:0 0;'>Copy</div>
<div class=t style='left:68px;top:105.02px;font-size:12.5px;color:#444;transform:scaleX(0.9435);transform-origin:0 0;'>Format Painter</div>
<div class=t style='left:45px;top:127.84px;font-size:12px;color:#666;transform:scaleX(0.9927);transform-origin:0 0;'>Clipboard</div>
<div class=t style='left:270px;top:127.84px;font-size:12px;color:#666;transform:scaleX(0.9161);transform-origin:0 0;'>Font</div>
<div class=t style='left:498px;top:127.84px;font-size:12px;color:#666;transform:scaleX(0.9456);transform-origin:0 0;'>Paragraph</div>
<div class=t style='left:1033px;top:127.84px;font-size:12px;color:#666;transform:scaleX(0.9178);transform-origin:0 0;'>Styles</div>
<div class=t style='left:1488px;top:127.84px;font-size:12px;color:#666;transform:scaleX(1.0081);transform-origin:0 0;'>Editing</div>
<div class=t style='left:165px;top:66.84px;font-size:12px;color:#000;transform:scaleX(0.9577);transform-origin:0 0;'>Arial</div>
<div class=t style='left:259px;top:66.84px;font-size:12px;color:#000;transform:scaleX(0.8982);transform-origin:0 0;'>10</div>
<div class=t style='left:658.5px;top:71.48px;font-size:14.5px;color:#1a1a1a;transform:scaleX(1.0682);transform-origin:0 0;font-family:"Liberation Serif",serif;-webkit-text-stroke:0.35px #1a1a1a'>AaBbCcI</div>
<div class=t style='left:731px;top:71.23px;font-size:14.5px;color:#1a1a1a;transform:scaleX(1.0280);transform-origin:0 0;font-style:italic;-webkit-text-stroke:0.25px #1a1a1a'>AaBbCcl</div>
<div class=t style='left:805px;top:60.87px;font-size:28.5px;color:#2d5e91;-webkit-text-stroke:0.40px #fff;'>1</div>
<div class=t style='left:835px;top:60.87px;font-size:28.5px;color:#2d5e91;-webkit-text-stroke:0.40px #fff;'>Ac</div>
<div class=t style='left:876px;top:68.92px;font-size:19px;color:#2d5e91;transform:scaleX(0.8894);transform-origin:0 0;-webkit-text-stroke:0.15px #fff;'>1.1</div>
<div class=t style='left:915.5px;top:68.92px;font-size:19px;color:#2d5e91;-webkit-text-stroke:0.15px #fff;'>Ac</div>
<div class=t style='left:947.5px;top:68.92px;font-size:19px;color:#2d5e91;transform:scaleX(0.9109);transform-origin:0 0;-webkit-text-stroke:0.15px #fff;'>1.1.1</div>
<div class=t style='left:999px;top:68.92px;font-size:19px;color:#2d5e91;-webkit-text-stroke:0.15px #fff;'>A</div>
<div class=t style='left:1019.5px;top:70.76px;font-size:16px;color:#2d5e91;transform:scaleX(0.8991);transform-origin:0 0;-webkit-text-stroke:0.15px #fff;'>1.1.1.1</div>
<div class=t style='left:1073px;top:70.76px;font-size:16px;color:#2d5e91;-webkit-text-stroke:0.15px #fff;'>A</div>
<div class=t style='left:1091px;top:70.60px;font-size:15px;color:#2e2e9e;transform:scaleX(0.8477);transform-origin:0 0;'>1.1.1.1.1</div>
<div class=t style='left:1163px;top:70.60px;font-size:15px;color:#2e2e9e;transform:scaleX(0.9419);transform-origin:0 0;'>1.1.1.1.1</div>
<div class=t style='left:1235px;top:70.26px;font-size:16px;color:#1b3f6e;transform:scaleX(0.9393);transform-origin:0 0;'>1.1.1.1.1</div>
<div class=t style='left:1307.5px;top:70.26px;font-size:16px;color:#1b3f6e;transform:scaleX(0.9393);transform-origin:0 0;font-style:italic'>1.1.1.1.1</div>
<div class=t style='left:1379px;top:70.26px;font-size:16px;color:#1b3f6e;transform:scaleX(0.8768);transform-origin:0 0;'>1.1.1.1.1.</div>
<div class=t style='left:670px;top:96.84px;font-size:12px;color:#444;transform:scaleX(0.9693);transform-origin:0 0;'>¶ Body</div>
<div class=t style='left:733px;top:96.84px;font-size:12px;color:#444;transform:scaleX(1.0168);transform-origin:0 0;'>¶ Caption</div>
<div class=t style='left:805px;top:96.84px;font-size:12px;color:#444;transform:scaleX(0.9686);transform-origin:0 0;'>Heading 1</div>
<div class=t style='left:877px;top:96.84px;font-size:12px;color:#444;transform:scaleX(0.9869);transform-origin:0 0;'>Heading 2</div>
<div class=t style='left:944px;top:96.84px;font-size:12px;color:#444;transform:scaleX(0.9767);transform-origin:0 0;'>¶ Heading 3</div>
<div class=t style='left:1016px;top:96.84px;font-size:12px;color:#444;transform:scaleX(0.9767);transform-origin:0 0;'>¶ Heading 4</div>
<div class=t style='left:1088px;top:96.84px;font-size:12px;color:#444;transform:scaleX(0.9767);transform-origin:0 0;'>¶ Heading 5</div>
<div class=t style='left:1160px;top:96.84px;font-size:12px;color:#444;transform:scaleX(0.9767);transform-origin:0 0;'>¶ Heading 6</div>
<div class=t style='left:1232px;top:96.84px;font-size:12px;color:#444;transform:scaleX(0.9767);transform-origin:0 0;'>¶ Heading 7</div>
<div class=t style='left:1304px;top:96.84px;font-size:12px;color:#444;transform:scaleX(0.9767);transform-origin:0 0;'>¶ Heading 8</div>
<div class=t style='left:1376px;top:96.84px;font-size:12px;color:#444;transform:scaleX(0.9767);transform-origin:0 0;'>¶ Heading 9</div>
<div class=t style='left:1494px;top:58.72px;font-size:12.5px;color:#444;transform:scaleX(0.9454);transform-origin:0 0;'>Find</div>
<div class=t style='left:1494px;top:81.92px;font-size:12.5px;color:#444;transform:scaleX(0.8937);transform-origin:0 0;'>Replace</div>
<div class=t style='left:1494px;top:104.92px;font-size:12.5px;color:#444;transform:scaleX(0.8921);transform-origin:0 0;'>Select</div>
<div class=t style='left:7.5px;top:843.67px;font-size:11.5px;color:#fff;transform:scaleX(0.8851);transform-origin:0 0;'>PAGE 10 OF 21</div>
<div class=t style='left:100px;top:843.67px;font-size:11.5px;color:#fff;transform:scaleX(0.9306);transform-origin:0 0;'>3521 WORDS</div>
<div class=t style='left:219.4px;top:843.67px;font-size:11.5px;color:#fff;transform:scaleX(0.8392);transform-origin:0 0;'>ENGLISH (UNITED STATES)</div>
<div class=t style='left:1564px;top:842.87px;font-size:11.5px;color:#fff;transform:scaleX(0.9118);transform-origin:0 0;'>87%</div>
<!-- gallery clipping overlays -->
<div class="a" style="left:861px;top:58px;width:14px;height:32px;background:#fff"></div>
<div class="a" style="left:934px;top:58px;width:10px;height:32px;background:#fff"></div>
<div class="a" style="left:1006px;top:58px;width:10px;height:32px;background:#fff"></div>
<div class="a" style="left:1078px;top:58px;width:10px;height:32px;background:#fff"></div>
</body></html>
